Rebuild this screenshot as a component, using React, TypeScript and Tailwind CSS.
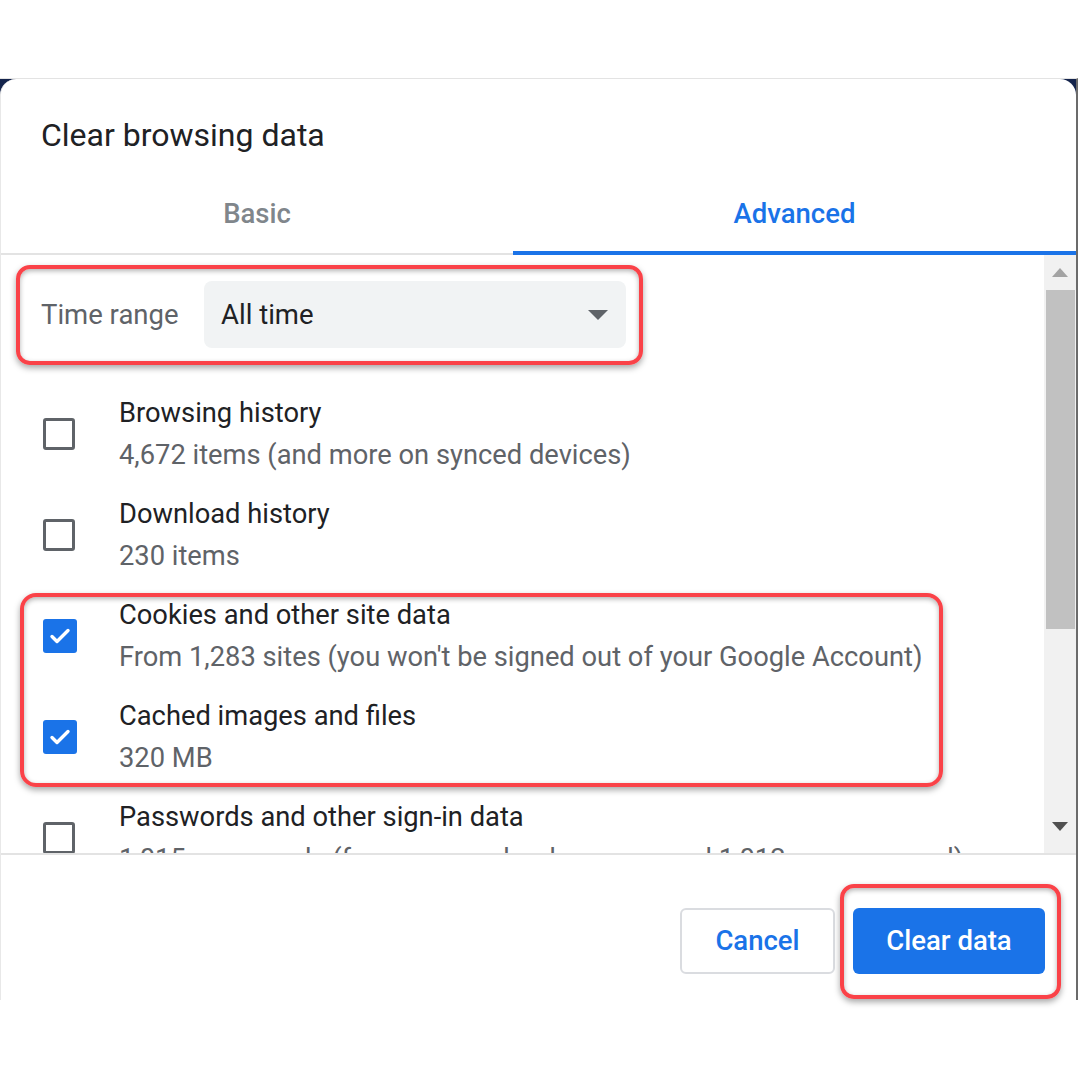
import React from "react";

const font = { fontFamily: "Roboto, 'Noto Sans', Arial, sans-serif" };

function Unchecked() {
  return <div className="w-[32px] h-[32px] rounded-[3px] border-[3px] border-[#5f6368] shrink-0" />;
}

function Checked() {
  return (
    <div className="w-[34px] h-[34px] rounded-[3px] bg-[#1a73e8] shrink-0 flex items-center justify-center">
      <svg width="26" height="26" viewBox="0 0 26 26">
        <path d="M5 13.5l5 5L21 7.5" fill="none" stroke="white" strokeWidth="3.4" strokeLinecap="round" strokeLinejoin="round" />
      </svg>
    </div>
  );
}

function Row({ title, sub, checked }: { title: string; sub: string; checked?: boolean }) {
  return (
    <div className="h-[101px] flex items-center shrink-0">
      <div className="w-[118px] pl-[42px] shrink-0 flex items-center">{checked ? <Checked /> : <Unchecked />}</div>
      <div className="flex flex-col">
        <div className="text-[27.3px] leading-[42px] text-[#202124] whitespace-nowrap">{title}</div>
        <div className="text-[27.3px] leading-[42px] text-[#5f6368] whitespace-nowrap">{sub}</div>
      </div>
    </div>
  );
}

export default function App() {
  return (
    <div className="relative w-[1080px] h-[1080px] bg-white overflow-hidden" style={font}>
      <div className="pt-[78px]">
        <div className="w-[1078px] h-[922px] bg-[#14244c] border-t border-[#e3e3e3] border-r-2 border-r-[#6b6b6b]">
          <div className="h-full bg-white rounded-t-[16px] border-l border-[#e8e8e8] flex flex-col">
            {/* title */}
            <div className="h-[99px] pl-[40px] pt-[36px] shrink-0">
              <div className="text-[32px] leading-[40px] text-[#202124]">Clear browsing data</div>
            </div>
            {/* tabs */}
            <div className="relative h-[77px] flex shrink-0 border-b-2 border-[#e3e3e3]">
              <div className="w-[512px] flex items-center justify-center pb-[4px] text-[27.5px] font-medium text-[#80868b]">Basic</div>
              <div className="flex-1 flex items-center justify-center pb-[4px] text-[27.5px] font-medium text-[#1a73e8]">Advanced</div>
              <div className="absolute left-[512px] right-0 bottom-[-2px] h-[4px] bg-[#1a73e8]" />
            </div>
            {/* scroll area */}
            <div className="h-[600px] flex shrink-0 overflow-hidden border-b-2 border-[#e3e3e3]">
              <div className="flex-1 flex flex-col overflow-hidden">
                <div className="h-[26px] shrink-0" />
                <div className="h-[67px] flex items-center shrink-0">
                  <div className="w-[203px] pl-[40px] text-[27.5px] text-[#5f6368] shrink-0">Time range</div>
                  <div className="w-[422px] h-[67px] rounded-[8px] bg-[#f1f3f4] flex items-center justify-between pl-[17px] pr-[18px]">
                    <span className="text-[27.5px] text-[#202124]">All time</span>
                    <svg width="20" height="10" viewBox="0 0 20 10">
                      <path d="M0 0h20L10 10z" fill="#5f6368" />
                    </svg>
                  </div>
                </div>
                <div className="h-[35px] shrink-0" />
                <Row title="Browsing history" sub="4,672 items (and more on synced devices)" />
                <Row title="Download history" sub="230 items" />
                <Row title="Cookies and other site data" sub="From 1,283 sites (you won't be signed out of your Google Account)" checked />
                <Row title="Cached images and files" sub="320 MB" checked />
                <Row title="Passwords and other sign-in data" sub="1,015 passwords (for rsu.com, dropbox.com, and 1,012 more, synced)" />
              </div>
              <div className="w-[32px] bg-[#f1f1f1] flex flex-col items-center shrink-0">
                <div className="h-[35px] flex items-center justify-center">
                  <svg width="16" height="9" viewBox="0 0 16 9"><path d="M0 9h16L8 0z" fill="#a3a3a3" /></svg>
                </div>
                <div className="w-[29px] h-[339px] bg-[#c1c1c1]" />
                <div className="flex-1" />
                <div className="h-[34px] flex items-start justify-center pt-[3px]">
                  <svg width="16" height="9" viewBox="0 0 16 9"><path d="M0 0h16L8 9z" fill="#505050" /></svg>
                </div>
              </div>
            </div>
            {/* footer */}
            <div className="flex-1 flex justify-end items-start pt-[53px] pr-[31px] gap-[18px]">
              <div className="w-[155px] h-[66px] rounded-[6px] border-2 border-[#dadce0] flex items-center justify-center text-[27.5px] font-medium text-[#1a73e8]">Cancel</div>
              <div className="w-[192px] h-[66px] rounded-[6px] bg-[#1a73e8] flex items-center justify-center text-[27.5px] font-medium text-white">Clear data</div>
            </div>
          </div>
        </div>
      </div>

      {/* annotation boxes */}
      <div className="absolute left-[16px] top-[265px] w-[627px] h-[100px] rounded-[14px] border-[4px] border-[#fa4248] shadow-[0_3px_6px_rgba(0,0,0,0.35),inset_0_2px_5px_rgba(0,0,0,0.3)]" />
      <div className="absolute left-[20px] top-[593px] w-[923px] h-[194px] rounded-[16px] border-[4px] border-[#fa4248] shadow-[0_3px_6px_rgba(0,0,0,0.35),inset_0_2px_5px_rgba(0,0,0,0.3)]" />
      <div className="absolute left-[840px] top-[884px] w-[221px] h-[115px] rounded-[14px] border-[4px] border-[#fa4248] shadow-[0_3px_6px_rgba(0,0,0,0.35),inset_0_2px_5px_rgba(0,0,0,0.3)]" />
    </div>
  );
}
